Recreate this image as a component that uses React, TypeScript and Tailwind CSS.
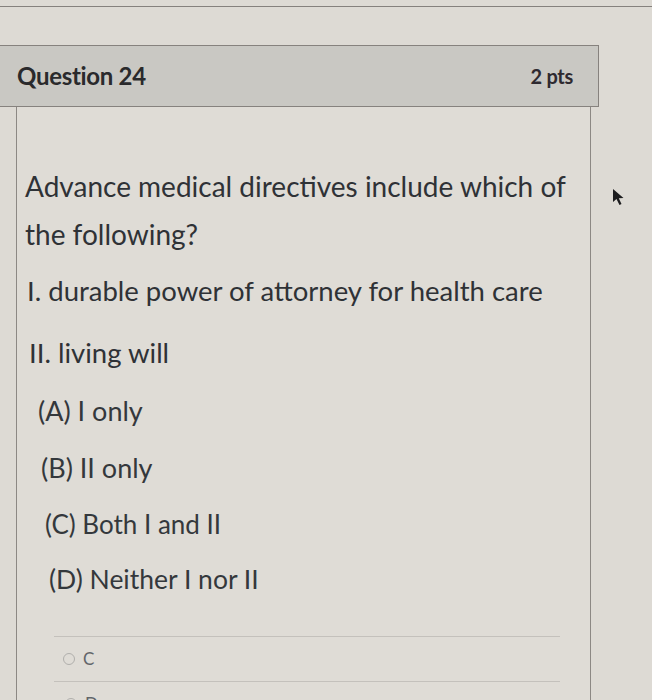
import React from "react";

export default function App() {
  const options = [
    { t: "(A) I only", pl: "pl-[37px]", mt: "mt-[10px]", fs: "text-[27px]" },
    { t: "(B) II only", pl: "pl-[40px]", mt: "mt-[9px]", fs: "text-[27px]" },
    { t: "(C) Both I and II", pl: "pl-[44px]", mt: "mt-[8px]", fs: "text-[26px]" },
    { t: "(D) Neither I nor II", pl: "pl-[48px]", mt: "mt-[7px]", fs: "text-[26.5px]" },
  ];
  return (
    <div
      className="w-[652px] h-[700px] overflow-hidden bg-[#dddad4] relative"
      style={{ fontFamily: "Lato, 'Open Sans', sans-serif" }}
    >
      <div className="h-[6px]" />
      <div className="h-px bg-[#85817d]" />
      <div className="h-[38px]" />
      <div className="w-[599px] flex flex-col">
        <div className="h-[62px] bg-[#c9c8c3] border-t border-b border-r border-[#86827e] flex items-center justify-between pl-[17px] pr-[25px]">
          <span className="text-[24px] font-bold text-[#2a2a2c] tracking-[-0.3px]">Question 24</span>
          <span className="text-[20px] font-bold text-[#2e2a30] tracking-[-0.3px]">2 pts</span>
        </div>
        <div className="ml-[16px] mr-[8px] h-[600px] border-l border-r border-[#8c8884] bg-[#dfdcd6] pt-[55px]">
          <div className="pl-[8px] text-[28px] leading-[48px] text-[#2f3236]">
            Advance medical directives include which of
            <br />
            the following?
          </div>
          <div className="pl-[10px] mt-[9px] text-[27.5px] leading-[48px] text-[#2f3236]">
            I. durable power of attorney for health care
          </div>
          <div className="pl-[12px] mt-[14px] text-[27.5px] leading-[48px] text-[#2f3236]">
            II. living will
          </div>
          {options.map((o) => (
            <div
              key={o.t}
              className={`${o.pl} ${o.mt} ${o.fs} -ml-[16px] leading-[48px] text-[#34383c]`}
            >
              {o.t}
            </div>
          ))}
          <div className="mt-[33px] ml-[37px] mr-[30px] h-px bg-[#c4c1bc]" />
          <div className="ml-[46px] h-[44px] flex items-center gap-[8px] text-[17px] text-[#62666a]">
            <span className="w-[12px] h-[12px] rounded-full border border-[#b0afac]" />
            <span>C</span>
          </div>
          <div className="ml-[37px] mr-[30px] h-px bg-[#c4c1bc]" />
          <div className="ml-[48px] h-[30px] flex items-center gap-[8px] text-[17px] text-[#62666a] pt-[14px]">
            <span className="w-[12px] h-[12px] rounded-full border border-[#b0afac]" />
            <span>D</span>
          </div>
        </div>
      </div>
      <svg
        className="absolute left-[612px] top-[188px]"
        width="16"
        height="20"
        viewBox="0 0 16 20"
      >
        <path d="M1 1 L1 14 L4.5 11 L7.5 17 L9.5 16 L6.8 10.2 L11.5 10 Z" fill="#1c1c1e" />
      </svg>
    </div>
  );
}
